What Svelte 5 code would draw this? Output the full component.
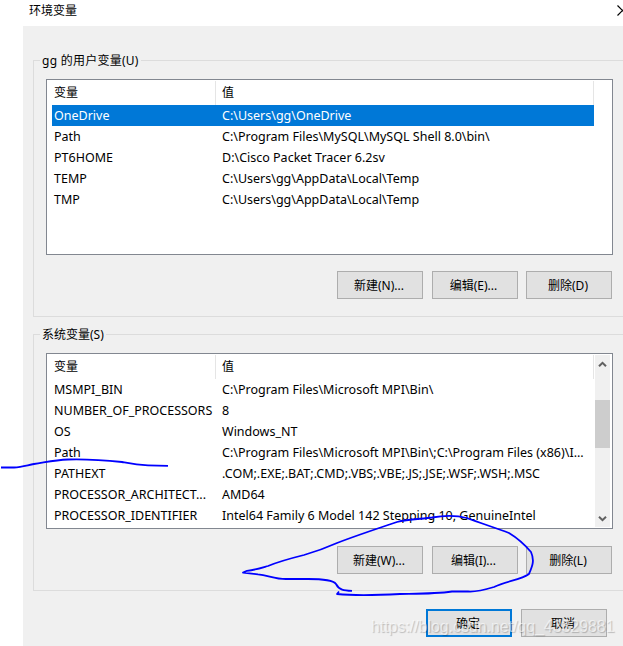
<script lang="ts">
	type Variable = { name: string; value: string };
	type Group = {
		title: string;
		variables: Variable[];
		selected: number;
		scroll: boolean;
		actions: string[];
	};

	const groups: Group[] = [
		{
			title: 'gg 的用户变量(U)',
			variables: [
				{ name: 'OneDrive', value: 'C:\\Users\\gg\\OneDrive' },
				{ name: 'Path', value: 'C:\\Program Files\\MySQL\\MySQL Shell 8.0\\bin\\' },
				{ name: 'PT6HOME', value: 'D:\\Cisco Packet Tracer 6.2sv' },
				{ name: 'TEMP', value: 'C:\\Users\\gg\\AppData\\Local\\Temp' },
				{ name: 'TMP', value: 'C:\\Users\\gg\\AppData\\Local\\Temp' }
			],
			selected: 0,
			scroll: false,
			actions: ['新建(N)...', '编辑(E)...', '删除(D)']
		},
		{
			title: '系统变量(S)',
			variables: [
				{ name: 'MSMPI_BIN', value: 'C:\\Program Files\\Microsoft MPI\\Bin\\' },
				{ name: 'NUMBER_OF_PROCESSORS', value: '8' },
				{ name: 'OS', value: 'Windows_NT' },
				{ name: 'Path', value: 'C:\\Program Files\\Microsoft MPI\\Bin\\;C:\\Program Files (x86)\\I...' },
				{ name: 'PATHEXT', value: '.COM;.EXE;.BAT;.CMD;.VBS;.VBE;.JS;.JSE;.WSF;.WSH;.MSC' },
				{ name: 'PROCESSOR_ARCHITECT...', value: 'AMD64' },
				{ name: 'PROCESSOR_IDENTIFIER', value: 'Intel64 Family 6 Model 142 Stepping 10, GenuineIntel' }
			],
			selected: -1,
			scroll: true,
			actions: ['新建(W)...', '编辑(I)...', '删除(L)']
		}
	];

	let selected = $state(groups.map((g) => g.selected));
</script>

<div class="window">
	<header class="titlebar">
		<span>环境变量</span>
		<button class="close" aria-label="关闭">
			<svg width="11" height="11" viewBox="0 0 11 11">
				<path d="M0.5 0.5 10.5 10.5M10.5 0.5 0.5 10.5" fill="none" stroke="#000" stroke-width="1.2" />
			</svg>
		</button>
	</header>

	<main class="dialog">
		{#each groups as group, g}
			<fieldset class="group">
				<legend>{group.title}</legend>
				<div class="list">
					<div class="table">
						<div class="row head">
							<span>变量</span>
							<span>值</span>
						</div>
						{#each group.variables as variable, i}
							<!-- svelte-ignore a11y_click_events_have_key_events, a11y_no_static_element_interactions -->
							<div class="row" class:selected={selected[g] === i} onclick={() => (selected[g] = i)}>
								<span>{variable.name}</span>
								<span>{variable.value}</span>
							</div>
						{/each}
					</div>
					{#if group.scroll}
						<div class="scrollbar">
							<svg width="9" height="7" viewBox="0 0 9 7"><path d="M1 5.3 4.5 1.8 8 5.3" /></svg>
							<div class="thumb"></div>
							<svg width="9" height="7" viewBox="0 0 9 7"><path d="M1 1.7 4.5 5.2 8 1.7" /></svg>
						</div>
					{/if}
				</div>
				<div class="actions">
					{#each group.actions as action}
						<button class="btn">{action}</button>
					{/each}
				</div>
			</fieldset>
		{/each}

		<footer>
			<button class="btn primary">确定</button>
			<button class="btn">取消</button>
		</footer>
	</main>

	<svg class="ink" width="623" height="646" viewBox="0 0 623 646">
		<path d="M1 467.5H14C22 467 28 465 34 464C47 462 55 460 68 459.5C88 459 103 460 122 462C132 464 136 465 148 465.3L168 465.8" />
		<path d="M352 590.8C344 590.5 339 590 336 584C333 580 320 579 308 579H286C274 579 268 575 258 574.3L243 572.6L247 570.8C255 570 261 568 268 566C280 561 292 558 304 555C318 551 328 547 337 543C355 536 376 529 397 522C408 519 422 519 432 517.5C446 515 457 515.5 467 518C480 523 496 528 509 533C519 539 525 545 531 552C535 561 532 567 529 574C521 580 506 581 494 587C484 590 474 592 468 591.5H452C435 594 415 593.7 400 594C382 595 356 596 337 594L339 591.5" />
	</svg>
	<div class="watermark">https://blog.csdn.net/qq_43329881</div>
</div>

<style>
	:global(body) {
		margin: 0;
		background: #fff;
	}

	.window {
		position: relative;
		width: 623px;
		height: 646px;
		overflow: hidden;
		background: #fff;
		color: #000;
		font: 12px/21px 'Noto Sans', 'Noto Sans CJK SC', sans-serif;
	}

	.titlebar {
		display: flex;
		justify-content: space-between;
		width: 628px;
		height: 26px;
		padding-left: 29px;
		box-sizing: border-box;
	}

	.close {
		display: flex;
		align-items: flex-start;
		width: 11px;
		height: 20px;
		padding: 5px 0 0;
		border: none;
		background: none;
	}

	.dialog {
		width: 612px;
		height: 620px;
		margin-left: 23px;
		padding: 25px 0 0 10px;
		box-sizing: border-box;
		background: #f0f0f0;
	}

	.group {
		display: block;
		width: 593px;
		height: 266px;
		margin: 0 0 8px;
		padding: 0 0 0 12px;
		box-sizing: border-box;
		border: 1px solid #dcdcdc;
	}

	legend {
		height: 19px;
		margin-left: -6px;
		padding: 0 2px;
		line-height: 19px;
	}

	.group:first-child legend {
		letter-spacing: 0.25px;
	}

	.list {
		display: flex;
		width: 567px;
		height: 176px;
		margin-top: 9px;
		box-sizing: border-box;
		border: 1px solid #828790;
		background: #fff;
		overflow: hidden;
	}

	.table {
		width: 542px;
		margin-left: 5px;
	}

	.row {
		display: grid;
		grid-template-columns: 168px 1fr;
		height: 21px;
		padding-left: 2px;
		font-size: 12.5px;
		white-space: pre;
	}

	.row.head {
		height: 24px;
		margin: 1px 0 0;
		padding-left: 2px;
		border-right: 1px solid #e5e5e5;
		font-size: 12px;
		line-height: 23px;
	}

	.row.head span:first-child {
		margin-right: 6px;
		border-right: 1px solid #e5e5e5;
	}

	.row.selected {
		background: #0078d7;
		color: #fff;
	}

	.scrollbar {
		display: flex;
		flex-direction: column;
		align-items: center;
		width: 15px;
		height: 172px;
		margin: 1px 0 0 1px;
		padding: 6px 0 5px;
		box-sizing: border-box;
		background: #f0f0f0;
	}

	.scrollbar svg:last-child {
		margin-top: auto;
	}

	.scrollbar path {
		fill: none;
		stroke: #606060;
		stroke-width: 2;
	}

	.thumb {
		width: 15px;
		height: 48px;
		margin-top: 32px;
		background: #cdcdcd;
	}

	.actions {
		display: flex;
		gap: 8.5px;
		width: 566px;
		margin-top: 16px;
		justify-content: flex-end;
	}

	.group:nth-child(2) .actions {
		margin-top: 17px;
	}

	.btn {
		width: 86px;
		height: 28px;
		padding: 0 2px 0 0;
		border: 1px solid #adadad;
		background: #e1e1e1;
		color: #000;
		font: inherit;
	}

	.btn.primary {
		border: 2px solid #0078d7;
	}

	footer {
		display: flex;
		gap: 9px;
		margin: 18px 0 0 393px;
	}

	.ink {
		position: absolute;
		top: 0;
		left: 0;
		pointer-events: none;
	}

	.ink path {
		fill: none;
		stroke: #0000ff;
		stroke-width: 1.8;
		stroke-linejoin: round;
	}

	.watermark {
		position: absolute;
		top: 617px;
		left: 371px;
		color: rgba(255, 255, 255, 0.6);
		font: 16px/20px 'Liberation Sans', Arial, sans-serif;
		letter-spacing: -0.06px;
		text-shadow: 1px 1px 1px rgba(0, 0, 0, 0.22);
		pointer-events: none;
	}
</style>
